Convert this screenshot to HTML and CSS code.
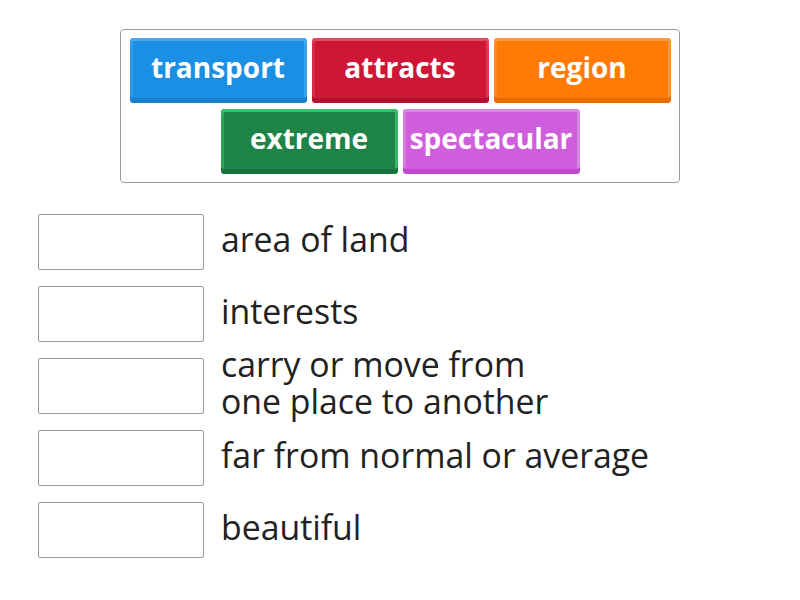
FILE: index.html
```html
<!DOCTYPE html>
<html>
<head>
<meta charset="utf-8">
<link rel="stylesheet" href="styles.css">
</head>
<body>
<div class="page">
  <div class="bank">
    <div class="bank-row">
      <div class="tile blue">transport</div>
      <div class="tile red">attracts</div>
      <div class="tile orange">region</div>
    </div>
    <div class="bank-row">
      <div class="tile green">extreme</div>
      <div class="tile purple">spectacular</div>
    </div>
  </div>
  <div class="rows">
    <div class="row"><div class="slot"></div><div class="def">area of land</div></div>
    <div class="row"><div class="slot"></div><div class="def">interests</div></div>
    <div class="row"><div class="slot"></div><div class="def">carry or move from<br>one place to another</div></div>
    <div class="row"><div class="slot"></div><div class="def">far from normal or average</div></div>
    <div class="row"><div class="slot"></div><div class="def">beautiful</div></div>
  </div>
</div>
</body>
</html>
```
FILE: styles.css
```css
html, body {
  margin: 0;
  padding: 0;
  background: #fff;
  font-family: "Open Sans", "Liberation Sans", sans-serif;
}
.page {
  padding-top: 29px;
}
.bank {
  width: 558px;
  margin-left: 120px;
  border: 1px solid #9a9a9a;
  border-radius: 4px;
  padding: 8px 0 8px;
  display: flex;
  flex-direction: column;
  gap: 6px;
}
.bank-row {
  display: flex;
  justify-content: center;
  gap: 5px;
}
.tile {
  width: 177px;
  height: 65px;
  box-sizing: border-box;
  border-radius: 4px;
  color: #fff;
  font-weight: 700;
  font-size: 28px;
  display: flex;
  align-items: center;
  justify-content: center;
  padding-bottom: 8px;
  letter-spacing: 0;
}
.blue {
  background: #1a8fe3;
  box-shadow: inset 0 -5px 0 #177fcc, inset 0 3px 0 #49aaee, inset 3px 0 0 #2d9be9, inset -3px 0 0 #3aa2ec;
}
.red {
  background: #cf1636;
  box-shadow: inset 0 -5px 0 #b3122e, inset 0 3px 0 #de4c62, inset 3px 0 0 #d52d48, inset -3px 0 0 #d93a53;
}
.orange {
  background: #ff7b05;
  box-shadow: inset 0 -5px 0 #ea6c00, inset 0 3px 0 #ff9a40, inset 3px 0 0 #ff8a20, inset -3px 0 0 #ff9535;
}
.green {
  background: #1e8346;
  box-shadow: inset 0 -5px 0 #19733d, inset 0 3px 0 #33c26a, inset 3px 0 0 #2aa85a, inset -3px 0 0 #31bb66;
}
.purple {
  background: #cf5edc;
  box-shadow: inset 0 -5px 0 #c045d1, inset 0 3px 0 #dc86e6, inset 3px 0 0 #d679e2, inset -3px 0 0 #da84e5;
}
.rows {
  margin-top: 31px;
  margin-left: 38px;
  display: flex;
  flex-direction: column;
  gap: 16px;
}
.row {
  display: flex;
  align-items: center;
  height: 56px;
}
.slot {
  width: 166px;
  height: 56px;
  box-sizing: border-box;
  border: 1px solid #9a9a9a;
  border-radius: 2px;
  flex-shrink: 0;
}
.def {
  margin-left: 17px;
  margin-bottom: 6px;
  font-size: 33.8px;
  line-height: 37px;
  color: #222;
  white-space: nowrap;
}
```
